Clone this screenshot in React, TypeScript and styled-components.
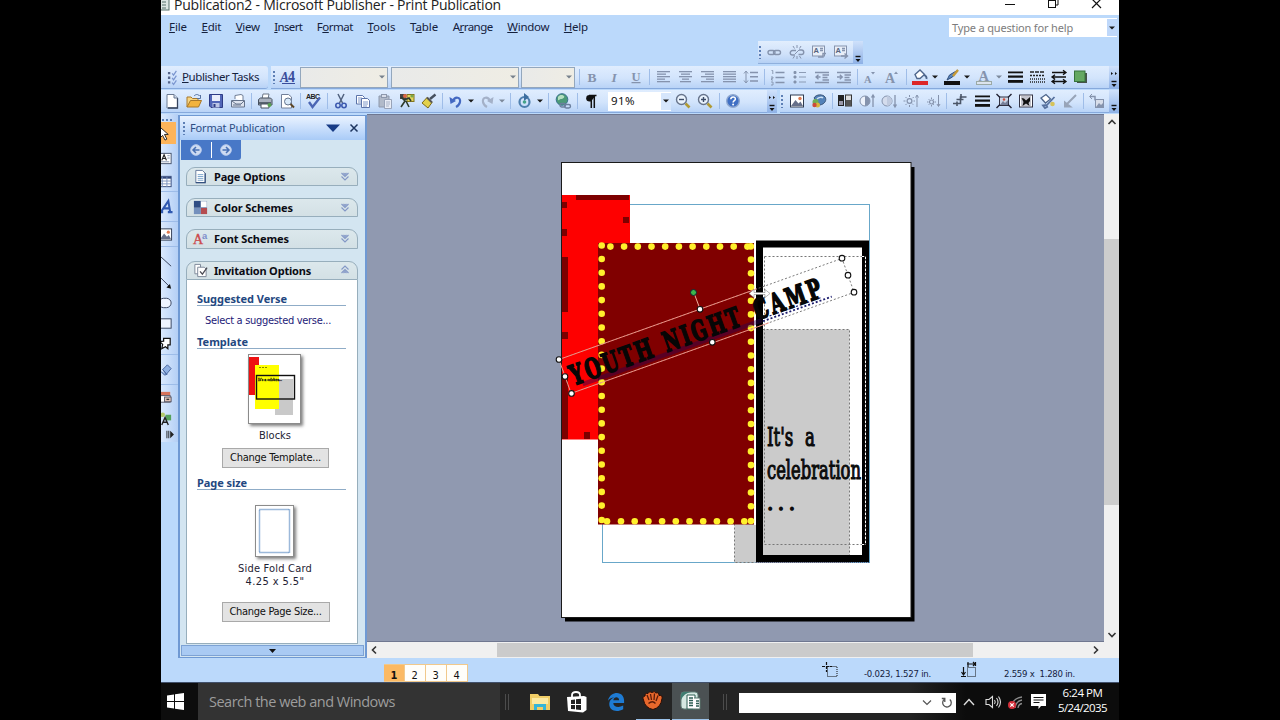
import React, { useLayoutEffect, useRef, useState } from "react";
import styled, { createGlobalStyle } from "styled-components";

const ui = `"Noto Sans", "Open Sans", sans-serif`;
const segoe = `"Open Sans", "Noto Sans", sans-serif`;
const tahoma = `"DejaVu Sans Condensed", "DejaVu Sans", sans-serif`;

const GlobalStyle = createGlobalStyle`
  * { box-sizing: border-box; }
  body { margin: 0; background: #000; overflow: hidden; }
`;

/* ---------- text that is tracked to a fixed width ---------- */

const Tracked = styled.span<{ $size: number; $color?: string; $bold?: boolean; $font?: string }>`
  display: inline-block;
  flex: none;
  white-space: pre;
  font-family: ${(p) => p.$font || ui};
  font-size: ${(p) => p.$size}px;
  line-height: 1.2;
  font-weight: ${(p) => (p.$bold ? 700 : 400)};
  font-stretch: ${(p) => (p.$font === tahoma ? "condensed" : "normal")};
  color: ${(p) => p.$color || "#14213d"};
  u { text-underline-offset: 1px; }
`;

type LabelProps = {
  width: number;
  size?: number;
  color?: string;
  bold?: boolean;
  font?: string;
  children: React.ReactNode;
};

function Label({ width, size = 12, color, bold, font, children }: LabelProps) {
  const ref = useRef<HTMLSpanElement>(null);
  const [spacing, setSpacing] = useState(0);
  useLayoutEffect(() => {
    const el = ref.current;
    if (!el) return;
    const count = (el.textContent || "").length;
    setSpacing((width - el.getBoundingClientRect().width) / count);
  }, [width]);
  return (
    <Tracked ref={ref} $size={size} $color={color} $bold={bold} $font={font} style={{ letterSpacing: spacing }}>
      {children}
    </Tracked>
  );
}

/* ---------- icons ---------- */

const Svg = styled.svg`
  display: block;
  flex: none;
  overflow: visible;
`;

const g = "#8593ad";

const lines = (ws: number[][], c = g) =>
  ws.map(([x, w], i) => <rect key={i} x={x} y={2 + i * 2.5} width={w} height="1.3" fill={c} />);

const icons: Record<string, React.ReactNode> = {
  fileNew: <><path d="M3 1.5h7l3.5 3.5v10H3z" fill="#fff" stroke="#6b7a92" /><path d="M13.5 5v10H4" fill="none" stroke="#34435e" strokeWidth="1.3" /><path d="M10 1.5V5h3.5" fill="#cfd9ea" stroke="#6b7a92" /></>,
  open: <><path d="M1 14V4h4l1.5 1.5H12V8" fill="#f6d583" stroke="#a8782a" /><path d="M1 14L4.500 7.500H15.500L12.500 14z" fill="#f3b33d" stroke="#a8782a" /><path d="M8 3c2-2 4-2 5.500 0l1-1v3.500h-3.500" fill="none" stroke="#56719f" /></>,
  save: <><path d="M1.500 1.500h13v13H3l-1.500-1.500z" fill="#5166b8" stroke="#2e3c86" /><rect x="4" y="2" width="8" height="6" fill="#e9eefb" /><rect x="4.500" y="10" width="7" height="4.500" fill="#bcc7e6" /><rect x="5.500" y="11" width="2" height="3" fill="#2e3c86" /></>,
  mail: <><path d="M5 6V2.500l6-1 2 1V8" fill="#fff" stroke="#717f97" /><path d="M1.500 7.500h13V14h-13z" fill="#dde3ee" stroke="#65738b" /><path d="M2 8l4 3h5l3-3M3 12h8" fill="none" stroke="#65738b" /></>,
  print: <><path d="M5 6l1-5h6l-1 5" fill="#fff" stroke="#6b7687" /><path d="M1.500 6.500l2-1.500h10l1.500 1.500V12h-13.500z" fill="#aab2bf" stroke="#46505f" /><rect x="2" y="9" width="12" height="2" fill="#59636f" /><path d="M4 11h8v4H4z" fill="#fff" stroke="#46505f" /><circle cx="12.500" cy="12" r="2" fill="#58a052" /></>,
  preview: <><path d="M2.500 1.500h7L12.500 4v11h-10z" fill="#fff" stroke="#72809a" /><circle cx="9" cy="8.500" r="3.500" fill="#d9eafa" stroke="#64748e" /><path d="M11.500 11l3.500 3.500" stroke="#5c4524" strokeWidth="2" /></>,
  spell: <><text x="0" y="6" fontSize="7" fontWeight="700" fontFamily="Liberation Sans" fill="#222" textLength="14">ABC</text><path d="M3 9l3.500 5L14 4.500" fill="none" stroke="#4b66b4" strokeWidth="2.400" /></>,
  cut: <><path d="M5 1l4.500 9M11 1L6.500 10" stroke="#51627f" strokeWidth="1.500" /><circle cx="5" cy="12.500" r="2.200" fill="none" stroke="#3e5bb0" strokeWidth="1.600" /><circle cx="11" cy="12.500" r="2.200" fill="none" stroke="#3e5bb0" strokeWidth="1.600" /></>,
  copy: <><path d="M1.500 2.500h6l2 2V11h-8z" fill="#fff" stroke="#5b73a8" /><path d="M3 5h4M3 7h4M3 9h3" stroke="#7f97c8" /><path d="M6.500 5.500h6l2 2v7h-8z" fill="#fff" stroke="#5b73a8" /><path d="M8 9h5M8 11h5M8 13h4" stroke="#7f97c8" /></>,
  paste: <><path d="M2 3h10v11H2z" fill="#b1bac9" stroke="#8d98ac" /><rect x="4.500" y="1.500" width="5" height="3" fill="#d9deea" stroke="#8d98ac" /><path d="M7.500 6.500h7v9h-7z" fill="#e8ecf5" stroke="#98a3b8" /><path d="M9 9h4M9 11h4M9 13h3" stroke="#a8b2c6" /></>,
  design: <><rect x="1" y="1" width="6" height="5" fill="#444" /><rect x="8" y="1.500" width="7" height="7" fill="#e3d45c" stroke="#81751f" /><path d="M2 4l4 4-4 6M5 7l5-2 2 3M7 8l3 6" fill="none" stroke="#2e3b2c" strokeWidth="1.600" /><circle cx="6" cy="3" r="2" fill="#dc6845" /><circle cx="13" cy="3" r="1.600" fill="#79a84b" /></>,
  brush: <><path d="M14.500 1.500L9 6" stroke="#46505f" strokeWidth="2.400" /><path d="M6 4.500l5 5-4 5.500-6-5z" fill="#e3d14b" stroke="#7d6a1a" /><path d="M6 4.500l5 5" stroke="#555" strokeWidth="2" /></>,
  undo: <><path d="M5 8C7 3 13 4 12 9c-.5 2.500-2 4-4 5" fill="none" stroke="#4469c2" strokeWidth="2.200" /><path d="M1.500 4l1 7 5.500-3z" fill="#4469c2" /></>,
  redo: <><path d="M11 8C9 3 3 4 4 9c.5 2.500 2 4 4 5" fill="none" stroke="#a4b1c8" strokeWidth="2.200" /><path d="M14.500 4l-1 7L8 8z" fill="#a4b1c8" /></>,
  rotate: <><circle cx="7.500" cy="9" r="5" fill="none" stroke="#4e7fae" strokeWidth="2.200" /><path d="M7 0l5 4-5 4z" fill="#3c6ea0" /><circle cx="7.500" cy="9" r="1.800" fill="#45a389" /></>,
  globe: <><circle cx="7" cy="6.500" r="5.800" fill="#4c9a78" stroke="#38708b" /><path d="M3 4c2-3 5-2 6-1s-1 3-3 3-2 2-3 1z" fill="#b5e0c0" /><rect x="5" y="10.500" width="5.500" height="3.500" rx="1.700" fill="none" stroke="#6b7f9e" strokeWidth="1.400" /><rect x="9.500" y="11.500" width="6" height="3.500" rx="1.700" fill="none" stroke="#6b7f9e" strokeWidth="1.400" /></>,
  para: <><path d="M13 2H6.500a3.300 3.300 0 000 6.600H8" fill="#111" /><path d="M8.300 2v13M11.300 2v13M6 2.500h7.500" stroke="#111" strokeWidth="1.500" /></>,
  zoomOut: <><circle cx="6.500" cy="6.500" r="5" fill="#eaf3fd" stroke="#67748c" strokeWidth="1.400" /><path d="M4 6.500h5" stroke="#3d4c68" strokeWidth="1.400" /><path d="M10.500 10.500l4 4" stroke="#b09a34" strokeWidth="2.600" /></>,
  zoomIn: <><circle cx="6.500" cy="6.500" r="5" fill="#eaf3fd" stroke="#67748c" strokeWidth="1.400" /><path d="M4 6.500h5M6.500 4v5" stroke="#3d4c68" strokeWidth="1.400" /><path d="M10.500 10.500l4 4" stroke="#b09a34" strokeWidth="2.600" /></>,
  help: <><circle cx="8" cy="8" r="6.300" fill="#3f6fc4" stroke="#8fa8d0" strokeWidth="1.400" /><path d="M5.800 6.200c0-3 4.600-3 4.600-.3 0 1.800-2.300 1.800-2.300 3.600" fill="none" stroke="#fff" strokeWidth="1.500" /><circle cx="8.100" cy="11.600" r="1" fill="#fff" /></>,
  picture: <><rect x="1.500" y="2" width="13" height="12" fill="#fff" stroke="#2e3a50" /><path d="M2 13l4.500-6 3 3.500 2-2 2.500 4.500z" fill="#66708a" /><circle cx="11" cy="5.500" r="1.700" fill="#e07a4f" /></>,
  recolor: <><path d="M3 5c2-4 9-4 11-1 2 3 0 7-5 8z" fill="#5482b8" stroke="#3a5578" /><path d="M6 6c2-2 5-2 6-1" stroke="#cfe2f4" strokeWidth="1.500" fill="none" /><circle cx="4.500" cy="9" r="3" fill="#6fae55" /><circle cx="6.500" cy="12" r="2.500" fill="#d8b53a" /><circle cx="3.500" cy="12" r="2.200" fill="#cc4b3a" /></>,
  shades: <><rect x="1" y="2" width="6" height="11" fill="#222" /><rect x="2" y="8" width="4" height="4" fill="#99a" /><rect x="8.500" y="2" width="6" height="11" fill="#ddd" stroke="#333" /><rect x="8.500" y="7" width="6" height="6" fill="#555" /></>,
  conUp: <><circle cx="6" cy="8" r="5" fill="#edf2fb" stroke={g} /><path d="M6 3a5 5 0 010 10z" fill={g} /><path d="M14 14V2.500m-1.500 2L14 2l1.500 2.500" stroke={g} fill="none" strokeWidth="1.300" /></>,
  conDn: <><circle cx="6" cy="8" r="5" fill="#d4dced" stroke={g} /><path d="M6 3a5 5 0 010 10z" fill="#bfcadf" /><path d="M14 2v11.500m-1.500-2L14 14l1.500-2.500" stroke={g} fill="none" strokeWidth="1.300" /></>,
  briUp: <><circle cx="6.500" cy="8" r="2.400" fill="none" stroke={g} strokeWidth="1.200" /><path d="M6.500 2v2M6.500 12v2M.500 8h2M10.500 8h1.500M2.500 4l1.200 1.200M9 10.500l1.200 1.200M2.500 12l1.200-1.200M9.500 5.200L10.700 4" stroke={g} /><path d="M14 14V2.500m-1.500 2L14 2l1.500 2.500" stroke={g} fill="none" /></>,
  briDn: <><circle cx="6.500" cy="9" r="2" fill="none" stroke={g} strokeWidth="1.200" /><path d="M6.500 4.500v1.500M6.500 12v1.500M2 9h1.500M9.500 9H11M3.500 6l.8.800M9 6l-.8.800M3.500 12l.8-.8M9 12l-.8-.8" stroke={g} /><path d="M13.500 2v11m-1.500-2l1.500 2.500L15 11" stroke={g} fill="none" /></>,
  crop: <path d="M1 10.500h7.500V4h6M4.500 6.500h7M5 13V8.500M9 1v4.500" fill="none" stroke="#4b5668" strokeWidth="1.600" />,
  linesBlk: <><rect x="1" y="2.500" width="15" height="1.800" fill="#111" /><rect x="1" y="6.500" width="15" height="2.200" fill="#111" /><rect x="1" y="11" width="15" height="2.800" fill="#111" /></>,
  compress: <><rect x="3.500" y="4" width="9" height="8.500" fill="#cdd6e6" stroke="#334" /><path d="M4 12l3-4 2 2 3-3v5z" fill="#77809a" /><circle cx="8" cy="6.500" r="1.200" fill="#d04b3a" /><path d="M.500 1L4 4.500M15.500 1L12 4.500M.500 15L4 11.500M15.500 15L12 11.500" stroke="#223" strokeWidth="1.400" /></>,
  wrap: <><rect x="1.500" y="2" width="13" height="12" fill="#fff" stroke="#334" /><path d="M3 4h10M3 6h10M3 8h10M3 10h10M3 12h10" stroke="#889" /><path d="M3.500 5l2.500.5L8 7.500 12 4v4l-1.500 2 1 3L8 10.500 4.500 13l1-4z" fill="#111" /></>,
  format: <><path d="M1 5l5-3.500 4.500 4.500-5 4z" fill="#fff" stroke="#4e668c" strokeWidth="1.300" /><path d="M14.500 4L6 13M7 12l-4 .5 2 2.500 3-1.500" stroke="#56719f" strokeWidth="1.800" fill="none" /><circle cx="12.500" cy="11" r="2.300" fill="#d6c35a" /></>,
  clear: <path d="M14 2L5.500 10.500M3 9.500v4h5z" stroke="#98a4b8" strokeWidth="2" fill="#98a4b8" />,
  reset: <><path d="M1 3.500h5v4" fill="none" stroke={g} strokeWidth="1.500" /><rect x="6.500" y="6.500" width="8" height="8" fill="#d8deea" stroke={g} /><path d="M3 1L.500 3.500 3 6" fill="none" stroke={g} /><path d="M7 14l3-4 2 2 2-2v4z" fill={g} /></>,
  styles: <><text x="0" y="13" fontSize="14" fontWeight="700" fontStyle="italic" fontFamily="Liberation Serif" fill="#394d9b" textLength="9" lengthAdjust="spacingAndGlyphs">A</text><text x="8" y="13" fontSize="16" fontWeight="700" fontFamily="Liberation Serif" fill="#394d9b" textLength="7" lengthAdjust="spacingAndGlyphs">4</text><path d="M2 14.500h13" stroke="#394d9b" /></>,
  bold: <text x="3.500" y="13" fontSize="13.500" fontWeight="700" fontFamily="Liberation Serif" fill={g}>B</text>,
  italic: <text x="5.500" y="13" fontSize="13.500" fontWeight="700" fontStyle="italic" fontFamily="Liberation Serif" fill={g}>I</text>,
  under: <text x="3.500" y="12" fontSize="12.500" fontWeight="700" fontFamily="Liberation Serif" fill={g} textDecoration="underline">U</text>,
  left: lines([[2, 13], [2, 9], [2, 13], [2, 8], [2, 13]]),
  center: lines([[2, 13], [4, 9], [2, 13], [5, 7], [3, 11]]),
  right: lines([[2, 13], [6, 9], [2, 13], [7, 8], [2, 13]]),
  justify: lines([[2, 13], [2, 13], [2, 13], [2, 13], [2, 13]]),
  spacing: <><path d="M3 3v10M1 4.500L3 2l2 2.500M1 11.500L3 14l2-2.500" stroke={g} fill="none" /><path d="M7 3.500h8M7 7.700h8M7 12h8" stroke={g} strokeWidth="1.400" /></>,
  numbers: <><path d="M1.500 1.500h1.300V5M1 8h2v1.300H1.500V11H3M1 13h2v3H1" stroke={g} strokeWidth=".9" fill="none" /><path d="M5.500 3.500h9M5.500 8.500h9M5.500 13.500h9" stroke={g} strokeWidth="1.300" /></>,
  bullets: <><path d="M2 2.500h2v2H2zM2 7h2v2H2zM2 12h2v2H2zM7 3.500h7M7 8h7M7 13h7" stroke={g} fill={g} strokeWidth=".9" /></>,
  outdent: <><path d="M1 3.500h14M8.500 6h6.500M8.500 8.500h5M8.500 11h6.500M1 13.500h14" stroke={g} strokeWidth="1.300" /><path d="M6.500 8H2M4.500 5.800L2 8l2.500 2.200" stroke={g} strokeWidth="1.300" fill="none" /></>,
  indent: <><path d="M1 3.500h14M8.500 6h6.500M8.500 8.500h5M8.500 11h6.500M1 13.500h14" stroke={g} strokeWidth="1.300" /><path d="M1 8h5M3.800 5.800L6.300 8l-2.500 2.200" stroke={g} strokeWidth="1.300" fill="none" /></>,
  shrink: <><text x="2" y="14" fontSize="10.500" fontWeight="700" fontFamily="Liberation Serif" fill={g}>A</text><path d="M9 3h4l-2 2.500z" fill={g} /></>,
  grow: <><text x="1" y="14" fontSize="14" fontWeight="700" fontFamily="Liberation Serif" fill={g}>A</text><path d="M10 5h4l-2-2.500z" fill={g} /></>,
  fill: <><path d="M3 5.500l5-4.500 4.500 4.500L8 9.500H5z" fill="#fff" stroke="#4e668c" strokeWidth="1.400" /><path d="M12 6q3 1 2.500 4" stroke="#4e668c" fill="none" strokeWidth="1.800" /><rect x="0" y="12" width="16" height="4" fill="#dd2626" /></>,
  line: <><path d="M14 1L8.500 8l-5.500 3 2.500-5z" fill="#5a86bd" stroke="#33507b" /><path d="M14 1L9 7" stroke="#c79a34" strokeWidth="2.400" /><rect x="0" y="12" width="16" height="4" fill="#111" /></>,
  fontc: <><text x="2.500" y="12" fontSize="14.500" fontWeight="700" fontFamily="Liberation Serif" fill={g}>A</text><rect x=".500" y="12.500" width="15" height="3" fill="#dce4ee" stroke="#9ba9a5" /></>,
  dashes: <><path d="M1 3h15" stroke="#222" strokeDasharray="4 1" strokeWidth="1.600" /><path d="M1 6.500h15" stroke="#222" strokeDasharray="2 1" strokeWidth="1.600" /><path d="M1 10h15M1 13h15" stroke="#222" strokeDasharray="1 1" strokeWidth="1.600" /></>,
  arrows: <path d="M1 3.500h14M12 1.300L15 3.500 12 5.700M15 8H1M4 5.800L1 8l3 2.200M1 12.500h14M12 10.300l3 2.200-3 2.200M4 10.300l-3 2.200 3 2.200" stroke="#111" strokeWidth="1.300" fill="none" />,
  shadow: <><rect x="4" y="4" width="10" height="10" fill="#455248" /><rect x="1.500" y="2" width="10.500" height="10.500" fill="#64a862" stroke="#36733c" /></>,
  link: <><rect x="1" y="6.500" width="7" height="4" rx="2" fill="none" stroke={g} strokeWidth="1.400" /><rect x="6.500" y="6.500" width="7" height="4" rx="2" fill="none" stroke={g} strokeWidth="1.400" /></>,
  unlink: <><path d="M7 6.500H3.500a2 2 0 000 4.500H6M9.500 10.500h3a2 2 0 000-4.500H10" fill="none" stroke={g} strokeWidth="1.400" /><path d="M8 1v3M4 2l1.500 2.500M12 2l-1.500 2.500M8 12v3M4 14.500L5.500 12M12 14.500L10.500 12M6 10l4-4" stroke={g} /></>,
  boxPrev: <><rect x="1.500" y="2" width="12" height="10" fill="#e8eef8" stroke={g} /><text x="2.500" y="9" fontSize="7.500" fontWeight="700" fontFamily="Liberation Sans" fill="#56647e">A</text><path d="M9 4.500h3M9 6.500h3M7 13h5V9.500h3" stroke={g} strokeWidth="1.400" fill="none" /></>,
  boxNext: <><rect x="1.500" y="2" width="12" height="10" fill="#e8eef8" stroke={g} /><text x="2.500" y="9" fontSize="7.500" fontWeight="700" fontFamily="Liberation Sans" fill="#56647e">A</text><path d="M9 4.500h3M9 6.500h3M8 12h6M11.500 9.500L14.500 12l-3 2.500" stroke={g} strokeWidth="1.400" fill="none" /></>,
  tasks: <><path d="M1 2h2.500v2.500H1zM1 7h2.500v2.500H1zM1 12h2.500v2.500H1z" fill="#56658a" /><path d="M5.500 3.500l1.500 2 3-4.500M5.500 8.500l1.500 2 3-4.500M5.500 13.500l1.500 2 3-4.500" stroke="#7a95cf" fill="none" strokeWidth="1.300" /></>,
  /* drawing tools */
  pointer: <path d="M3 1v12l3-3 2.500 5 2-1L8 9h4z" fill="#fff" stroke="#222" />,
  textbox: <><rect x="0" y="2.500" width="14" height="11" fill="#fff" stroke="#44526c" /><path d="M4 10l2.500-6L9 10M5 8h3" stroke="#222" strokeWidth="1.300" fill="none" /><path d="M10 5h2.500M10 7.500h2.500M3 11.500h9" stroke="#8494ad" /></>,
  table: <><rect x="0" y="2.500" width="14" height="11" fill="#fff" stroke="#33497c" /><path d="M0 4h14" stroke="#33497c" strokeWidth="2" /><path d="M0 7.500h14M0 10.500h14M4.500 3v11M9.500 3v11" stroke="#7c93bd" /></>,
  wordart: <path d="M3 14L11 2l2 12M6 10h7M1 14h4.500M10.500 14h5" stroke="#2f58b0" strokeWidth="2.200" fill="none" />,
  lineTool: <path d="M3 3l11 10" stroke="#333d55" />,
  arrowTool: <><path d="M3 2l9 9" stroke="#333d55" /><path d="M14 13.500l-5-1.300 3.700-3.700z" fill="#111" /></>,
  oval: <rect x="1" y="3.500" width="13" height="10" rx="5" fill="#eef4ff" stroke="#33405c" />,
  rect: <rect x="1" y="3" width="13" height="10" fill="#eef4ff" stroke="#33405c" />,
  shapes: <path d="M6 2.500h7v7h-2.500v4L8 11.500l-4 2 1-4.500-3-3 4-.5z" fill="#fff" stroke="#111" strokeWidth="1.300" />,
  book: <path d="M5 8l5-5 4 4-5 6zM5 8l4 5M3 10l4 4 3-1" fill="#8fb0e2" stroke="#48659d" />,
  form: <><rect x="2" y="2" width="11" height="4" fill="#d7745c" /><rect x="2" y="6" width="11" height="7" fill="#fff" stroke="#556" /><rect x="7" y="7.500" width="7" height="5" fill="#e6c6b8" stroke="#556" /><path d="M9 10h3" stroke="#333" strokeWidth="1.500" /></>,
  gallery: <><rect x="8" y="4" width="6" height="6" fill="#56a25c" /><path d="M4 15l3.500-8L11 15M5 12h5" stroke="#222" fill="none" strokeWidth="1.500" /><circle cx="5" cy="4" r="2.500" fill="#b3c96b" /></>,
  expand: <><path d="M9.500 4v8M11.500 4v8" stroke="#222" /><path d="M13 4l4 4-4 4z" fill="#222" /></>,
  /* task pane */
  pageOpt: <><path d="M3 1.500h7L13 4.500v10H3z" fill="#fff" stroke="#62779a" /><path d="M5 6h6M5 8h6M5 10h6M5 12h6" stroke="#79a3cc" /><path d="M13 4.500v10H3" stroke="#35517f" fill="none" strokeWidth="1.300" /></>,
  colors: <><rect x="1" y="1" width="14" height="14" fill="#8ea1bf" /><rect x="1" y="1" width="7" height="7" fill="#2f4d84" /><rect x="8.500" y="1.500" width="6" height="6" fill="#fff" /><rect x="1" y="8.500" width="7" height="6.500" fill="#7490bd" /><rect x="8.500" y="8.500" width="6.500" height="6.500" fill="#b54c50" /></>,
  fonts: <><text x="0" y="14" fontSize="15" fontFamily="Liberation Serif" fill="#cc4a4d" stroke="#cc4a4d" strokeWidth=".4">A</text><text x="9.500" y="9" fontSize="10" fontWeight="700" fontFamily="Liberation Sans" fill="#7d8ecb">a</text></>,
  invite: <><path d="M2 1.500h6v10H2z" fill="#fff" stroke="#7b8596" /><path d="M5 4.500h7l2 2v8H5z" fill="#fff" stroke="#7b8596" /><path d="M7.500 9l2.500 3 5-7" fill="none" stroke="#4c4c55" strokeWidth="1.400" /></>,
  chevDown: <path d="M4.500 4L8 7.500 11.500 4M4.500 7.500L8 11l3.500-3.500M6.500 4L8 5.500 9.500 4" fill="none" stroke="#8397c6" strokeWidth="1.100" />,
  chevUp: <path d="M4.500 7.500L8 4l3.500 3.500M4.500 11L8 7.500l3.500 3.500M6.500 11L8 9.500 9.500 11" fill="none" stroke="#8397c6" strokeWidth="1.100" />,
  /* status bar */
  position: <><path d="M4.500 0v10M0 4.500h10" stroke="#111" strokeWidth="1.200" strokeDasharray="3 1" /><rect x="5.500" y="4.500" width="9.500" height="10" fill="none" stroke="#111" strokeDasharray="1 1" /></>,
  sizeIcon: <><path d="M6 2h8M7 0v5M14.500 0v4M12 0l2 2-2 2M2.500 5v8M0 14.500h5M.500 10l2 3 2-3" stroke="#111" fill="none" strokeWidth="1.200" /><rect x="6.500" y="5.500" width="8" height="9" fill="none" stroke="#111" strokeDasharray="1 1" /></>,
};

const Icon = ({ name, size = 16 }: { name: string; size?: number }) => (
  <Svg width={size} height={size} viewBox="0 0 16 16">{icons[name]}</Svg>
);

/* ---------- window frame ---------- */

const Screen = styled.div`
  width: 1280px;
  height: 720px;
  padding: 0 161px;
  background: #000;
  overflow: hidden;
`;
const Shell = styled.div`
  width: 958px;
  height: 720px;
  display: flex;
  flex-direction: column;
  background: #bbd9fb;
  overflow: hidden;
`;
const TitleBar = styled.div`
  flex: none;
  height: 15px;
  background: #fff;
  display: flex;
  overflow: hidden;
`;
const TitleText = styled.div`
  margin: -4px 0 0 4px;
  flex: 1;
`;
const MenuArea = styled.div`
  flex: none;
  height: 51px;
  position: relative;
  display: flex;
  align-items: flex-start;
  justify-content: space-between;
`;
const Menus = styled.div`
  display: flex;
  gap: 14.600px;
  padding: 5px 0 0 8px;
`;
const HelpBox = styled.div`
  width: 168px;
  height: 19px;
  margin: 3px 2px 0 0;
  background: #fff;
  display: flex;
  align-items: center;
  padding-left: 3px;
  justify-content: space-between;
`;
const DropButton = styled.div<{ $h: number; $tone?: string }>`
  width: 10px;
  height: ${(p) => p.$h}px;
  background: ${(p) => p.$tone || "#bfd8fa"};
  display: flex;
  align-items: center;
  padding-left: 1px;
`;
const LinkBar = styled.div`
  position: absolute;
  left: 597px;
  top: 26px;
  width: 105px;
  height: 23px;
  display: flex;
  align-items: center;
  background: linear-gradient(#e2eefd, #cfe1fa 60%, #b5d0f4);
  border-bottom: 1px solid #8fb0dd;
`;
const Toolbar = styled.div`
  flex: none;
  height: 24px;
  display: flex;
  gap: 3px;
`;
const Strip = styled.div<{ $w?: number }>`
  height: 23px;
  width: ${(p) => (p.$w ? p.$w + "px" : "auto")};
  flex: ${(p) => (p.$w ? "none" : 1)};
  display: flex;
  align-items: center;
  border-radius: 0 3px 3px 0;
  background: linear-gradient(#e0edfe, #d2e4fc 55%, #b9d3f7);
  border-bottom: 1px solid #86a9dc;
`;
const Slot = styled.div<{ $w?: number }>`
  flex: none;
  width: ${(p) => p.$w || 22}px;
  display: flex;
  justify-content: center;
`;
const ArrowSlot = styled.div`
  flex: none;
  width: 9px;
  padding-left: 1px;
  display: flex;
`;
const Gap = styled.div<{ $w: number }>`
  flex: none;
  width: ${(p) => p.$w}px;
`;
const Fill = styled.div`
  flex: 1;
`;
const Sep = styled.div<{ $w?: number }>`
  flex: none;
  width: ${(p) => p.$w || 5}px;
  height: 16px;
  background: linear-gradient(#9fbde8, #9fbde8) center / 1px 100% no-repeat;
`;
const Grip = styled.div`
  flex: none;
  width: 6px;
  height: 14px;
  background: radial-gradient(circle, #5d7fb5 1px, transparent 1.300px) 0 0 / 4px 4px repeat-y;
`;
const Combo = styled.div<{ $w: number; $active?: boolean }>`
  flex: none;
  width: ${(p) => p.$w}px;
  height: ${(p) => (p.$active ? 19 : 21)}px;
  display: flex;
  align-items: center;
  justify-content: space-between;
  padding: 0 0 0 3px;
  background: ${(p) => (p.$active ? "#fff" : "linear-gradient(90deg, #e9eae9, #efede4)")};
  border: ${(p) => (p.$active ? "none" : "1px solid #93a7bd")};
`;
const OverflowBox = styled.div`
  flex: none;
  width: 10px;
  height: 23px;
  background: linear-gradient(#cfe1fb, #8eb1e6);
  display: grid;
  place-items: end center;
  padding-bottom: 1px;
`;

const Arrow = ({ color = "#1a1a1a" }: { color?: string }) => (
  <ArrowSlot>
    <Svg width="6" height="4"><path d="M0 .500h6L3 3.500z" fill={color} /></Svg>
  </ArrowSlot>
);
const Overflow = ({ more = true }: { more?: boolean }) => (
  <OverflowBox>
    <Svg width="8" height="18">
      {more && <path d="M1 2l2 1.500L1 5zM5 2l2 1.500L5 5z" fill="#111" />}
      <path d="M1.500 11.500h5" stroke="#111" strokeWidth="1.400" />
      <path d="M1.500 14h5L4 17z" fill="#111" />
    </Svg>
  </OverflowBox>
);

/* ---------- body ---------- */

const Body = styled.div`
  flex: none;
  height: 544px;
  display: flex;
`;
const ToolStrip = styled.div`
  flex: none;
  width: 17px;
  height: 328px;
  margin-bottom: auto;
  background: linear-gradient(90deg, #dae9fd, #b4cff5);
  display: flex;
  flex-direction: column;
  overflow: hidden;
  padding-top: 4px;
`;
const Tool = styled.div<{ $on?: boolean; $h?: number; $line?: boolean }>`
  flex: none;
  height: ${(p) => p.$h || 21}px;
  width: ${(p) => (p.$on ? 15 : 17)}px;
  padding-right: ${(p) => (p.$on ? 4 : 5)}px;
  display: flex;
  align-items: center;
  justify-content: flex-end;
  background: ${(p) => (p.$on ? "#fdb45a" : "transparent")};
  border-bottom: ${(p) => (p.$line ? "1px solid #9dbce8" : "0")};
`;
const ToolGrip = styled.div`
  flex: none;
  height: 4px;
  width: 13px;
  background: radial-gradient(circle, #5d7fb5 1px, transparent 1.300px) 0 0 / 4px 4px repeat-x;
`;
const Pane = styled.div`
  flex: none;
  width: 189px;
  height: 543px;
  margin-top: 1px;
  border: 2px solid #6f99d3;
  border-width: 1px 2px 1px 2px;
  background: #d3e5f1;
  display: flex;
  flex-direction: column;
`;
const PaneHeader = styled.div`
  flex: none;
  height: 24px;
  display: flex;
  align-items: center;
  padding: 0 7px 0 2px;
  background: linear-gradient(#eaf3ff, #c3dbfb 60%, #a9cbf7);
`;
const PaneNav = styled.div`
  width: 60px;
  height: 20px;
  margin-left: 1px;
  background: #4878c7;
  border-radius: 0 0 3px 0;
  display: flex;
  align-items: center;
  justify-content: center;
  gap: 8.500px;
`;
const NavLine = styled.div`
  width: 1px;
  height: 16px;
  background: #fff;
`;
const Cards = styled.div`
  padding: 7px 6px 0 6px;
  display: flex;
  flex-direction: column;
  gap: 12px;
  flex: 1;
`;
const Card = styled.div`
  flex: none;
  height: 19.200px;
  width: 172px;
  display: flex;
  align-items: center;
  padding: 0 4px 0 6px;
  gap: 6px;
  border: 1px solid #97aebc;
  border-radius: 9px 9px 0 0;
  background: linear-gradient(#dce8ec, #d3e0e5);
`;
const CardBody = styled.div`
  width: 172px;
  height: 364px;
  margin-top: -12px;
  padding: 12px 11px 0 10px;
  background: #fff;
  border: 1px solid #97aebc;
  border-top: 0;
  display: flex;
  flex-direction: column;
  align-items: center;
`;
const Heading = styled.div<{ $push?: number }>`
  align-self: stretch;
  flex: none;
  height: 14px;
  margin-top: ${(p) => p.$push || 0}px;
  border-bottom: 1px solid #8facc7;
  display: flex;
  align-items: center;
`;
const Line = styled.div<{ $top: number; $link?: boolean }>`
  flex: none;
  margin: ${(p) => p.$top}px ${(p) => (p.$link ? 7 : 0)}px 0 ${(p) => (p.$link ? 0 : 7)}px;
  height: 13px;
  display: flex;
  align-items: center;
`;
const PaneButton = styled.div<{ $w: number; $top: number }>`
  flex: none;
  width: ${(p) => p.$w}px;
  height: 20px;
  margin: ${(p) => p.$top}px 0 0 8px;
  display: flex;
  align-items: center;
  justify-content: center;
  background: #e3e3e3;
  border: 1px solid #a9a9a9;
`;
const Thumb = styled.div<{ $w: number; $h: number; $top: number }>`
  flex: none;
  width: ${(p) => p.$w}px;
  height: ${(p) => p.$h}px;
  margin: ${(p) => p.$top}px 0 0 6px;
  background: #fff;
  border: 1px solid #8b8b8b;
  box-shadow: 2px 2px 3px rgba(0, 0, 0, 0.5);
`;
const PaneFoot = styled.div`
  flex: none;
  height: 11px;
  margin: 0 1px 1px;
  background: #a9caf3;
  border: 1px solid #7da2d4;
  display: grid;
  place-items: center;
`;
const Work = styled.div`
  flex: 1;
  display: flex;
  flex-direction: column;
`;
const WorkTop = styled.div`
  flex: none;
  height: 528px;
  display: flex;
`;
const Canvas = styled.div`
  width: 737px;
  height: 528px;
  border-top: 1px solid #6f7790;
  border-bottom: 1px solid #6f7790;
  background: #9099b0;
  position: relative;
`;
const VScroll = styled.div`
  flex: 1;
  background: #f0f0f0;
  display: flex;
  flex-direction: column;
  align-items: center;
  justify-content: space-between;
  padding: 5px 0 4px;
`;
const VThumb = styled.div`
  width: 100%;
  height: 266px;
  margin-bottom: 13px;
  background: #cdcdcd;
`;
const HScroll = styled.div`
  height: 16px;
  background: #f0f0f0;
  display: flex;
  align-items: center;
  justify-content: space-between;
  padding: 0 20px 0 4px;
`;
const HThumb = styled.div`
  width: 476px;
  height: 14px;
  background: #cbcbcb;
`;

/* ---------- publication page ---------- */

const Artwork = styled.svg`
  position: absolute;
  left: 0;
  top: 0;
  overflow: visible;
`;

const step = 13.7;
const range = (n: number) => Array.from({ length: n }, (_, i) => i);

const dots: [number, number][] = [
  ...range(11).map((i): [number, number] => [610.4 + i * step, 246.6]),
  ...range(10).map((i): [number, number] => [621 + i * step, 521.3]),
  ...range(19).map((i): [number, number] => [601.7, 259 + i * step]),
  ...range(19).map((i): [number, number] => [751, 259.6 + i * step]),
  [601.7, 245.5], [750.8, 246.4], [601.7, 520], [607, 521.3], [751, 521],
];

const marks: [number, number, number, number][] = [
  [576, 195, 53, 5], [562, 202, 5, 6], [562, 229, 5, 7], [562, 257, 6, 55],
  [562, 332, 6, 7], [562, 378, 6, 61], [584, 432, 6, 7], [623, 217, 6, 6],
];

const handles: [number, number][] = [
  [559, 359.5], [700, 309.3], [842, 258.2], [565, 376.5], [848, 275.2],
  [571.5, 393.4], [712.3, 342.3], [854, 292.2],
];

const words: [string, number, number][] = [
  ["YOUTH", 5, 89], ["NIGHT", 104, 83], ["CAMP", 200, 73],
];

function Publication() {
  return (
    <Artwork width="737" height="526" viewBox="367 115 737 526">
      <rect x="565" y="167" width="349.500" height="454.500" fill="#000" />
      <rect x="561.500" y="162.500" width="349.500" height="455" fill="#fff" stroke="#1a1a1a" />
      <rect x="602.500" y="204.500" width="267" height="358" fill="none" stroke="#2f86b4" strokeDasharray="1 1" />
      <rect x="602.500" y="204.500" width="267" height="358" fill="none" stroke="#2f86b4" opacity=".45" />
      <rect x="562" y="195" width="68" height="244.500" fill="#fe0000" />
      {marks.map(([x, y, w, h], i) => <rect key={i} x={x} y={y} width={w} height={h} fill="#7d0000" />)}
      <rect x="734.500" y="329.500" width="115" height="233" fill="#cbcbcb" stroke="#777" strokeDasharray="2 2" />
      <rect x="759.500" y="244" width="106" height="314.500" fill="none" stroke="#000" strokeWidth="7" />
      <path d="M756 562.500H869" stroke="#557" strokeDasharray="1 1" />
      <rect x="754" y="241" width="2" height="284" fill="#fff" />
      <rect x="598" y="243" width="156" height="281.500" fill="#800000" />
      {dots.map(([x, y], i) => <circle key={i} cx={x} cy={y} r="3.300" fill="#fff02c" />)}
      <rect x="764.500" y="256.500" width="101" height="288" fill="none" stroke="#777" strokeDasharray="2 2" />
      <path d="M865.500 257V545M862 544.500h4M862 256.500h4" fill="none" stroke="#fff" strokeDasharray="2 2" />
      <g fontFamily="DejaVu Serif" fontSize="26" fill="#0b0b0b" stroke="#0b0b0b" strokeWidth="1.200">
        <text x="767" y="446" textLength="48" lengthAdjust="spacingAndGlyphs" wordSpacing="10">It's a</text>
        <text x="767" y="478.500" textLength="94" lengthAdjust="spacingAndGlyphs">celebration</text>
        <text x="767" y="510" fontSize="20" textLength="28" strokeWidth="1.500">...</text>
      </g>
      <g transform="translate(559 359.500) rotate(-19.650)">
        <rect x="14" y="29" width="190" height="4.500" fill="#2a0050" opacity=".45" />
        <path d="M205 32.500H278" stroke="#1b1b6e" strokeWidth="1.800" strokeDasharray="2 2" />
        <path d="M205 29.800H268" stroke="#1b1b6e" strokeWidth="1.200" strokeDasharray="2 2" />
        <g fontSize="27.500" fontFamily="DejaVu Serif" fontWeight="700" fill="#060606" stroke="#060606" strokeWidth="1.700" letterSpacing="4">
          {words.map(([word, x, w]) => (
            <text key={word} x={x} y="29.500" textLength={w} lengthAdjust="spacingAndGlyphs">{word}</text>
          ))}
        </g>
        <rect width="300.500" height="36" fill="none" stroke="#6b6b6b" strokeWidth=".8" strokeDasharray="2 2" />
        <path d="M210 0H0V36H210" fill="none" stroke="#ff9c8c" strokeWidth=".8" />
      </g>
      <path d="M700 309L694 293" stroke="#f0b0a0" />
      <circle cx="693.500" cy="292.500" r="3" fill="#3cb64b" stroke="#123" />
      {handles.map(([x, y], i) => <circle key={i} cx={x} cy={y} r="2.800" fill="#fff" stroke="#111" strokeWidth="1.100" />)}
      <path d="M749 293.500l5-4v3h11v-3l5 4-5 4v-3h-11v3z" fill="#fff" stroke="#8a8a8a" strokeWidth=".6" />
    </Artwork>
  );
}

/* ---------- status bar and taskbar ---------- */

const Status = styled.div`
  flex: none;
  height: 25px;
  display: flex;
  align-items: center;
  border-bottom: 1px solid #41506a;
`;
const PageTabs = styled.div`
  display: flex;
  margin-top: 6px;
  margin-left: 223px;
`;
const PageTab = styled.div<{ $on?: boolean }>`
  width: 21px;
  height: 18px;
  padding-top: 5px;
  display: flex;
  align-items: center;
  justify-content: center;
  background: ${(p) => (p.$on ? "#fbb963" : "#fffefa")};
  border: 1px solid #f1c98c;
  border-left-width: 0;
`;
const Readout = styled.div<{ $left: number }>`
  margin-left: ${(p) => p.$left}px;
  padding-top: 7px;
  display: flex;
`;
const Taskbar = styled.div`
  flex: none;
  height: 37px;
  display: flex;
  align-items: center;
  background: linear-gradient(90deg, #242424 78%, #0c0c0c 84%);
`;
const Start = styled.div`
  width: 37px;
  height: 37px;
  background: #0d0d0d;
  display: flex;
  align-items: center;
  padding-left: 6px;
`;
const Search = styled.div`
  width: 302px;
  height: 37px;
  background: #333;
  display: flex;
  align-items: center;
  padding: 1px 0 0 11px;
`;
const TaskButton = styled.div<{ $w?: number; $open?: boolean; $active?: boolean }>`
  width: ${(p) => p.$w || 38}px;
  height: 37px;
  display: grid;
  place-items: center;
  background: ${(p) => (p.$active ? "#4b5153" : "transparent")};
  border-bottom: ${(p) => (p.$open ? "1px solid #9cc3ea" : "0")};
`;
const Address = styled.div`
  width: 217px;
  height: 20px;
  margin: 2px 0 0 1px;
  background: #fff;
  display: flex;
  align-items: center;
  justify-content: flex-end;
`;
const Clock = styled.div`
  margin-left: 10px;
  width: 49px;
  height: 32px;
  display: flex;
  flex-direction: column;
  align-items: center;
  gap: 2px;
`;
const Handle = styled.div<{ $l: number; $r: number }>`
  margin: 0 ${(p) => p.$r}px 0 ${(p) => p.$l}px;
  width: 4px;
  height: 16px;
  border: solid #4c4c4c;
  border-width: 0 1px;
`;

const menuItems: [string, string, string, number][] = [
  ["", "F", "ile", 18], ["", "E", "dit", 19.5], ["", "V", "iew", 24], ["", "I", "nsert", 28],
  ["F", "o", "rmat", 36], ["", "T", "ools", 28], ["T", "a", "ble", 28], ["A", "r", "range", 40],
  ["", "W", "indow", 42], ["", "H", "elp", 24],
];

const tools: { name: string; h: number; on?: boolean; line?: boolean }[] = [
  { name: "pointer", h: 22, on: true }, { name: "textbox", h: 28 }, { name: "table", h: 20, line: true },
  { name: "wordart", h: 30, line: true }, { name: "picture", h: 25, line: true }, { name: "lineTool", h: 29 },
  { name: "arrowTool", h: 15 }, { name: "oval", h: 22 }, { name: "rect", h: 20 },
  { name: "shapes", h: 22, line: true }, { name: "book", h: 30, line: true }, { name: "form", h: 24 },
  { name: "gallery", h: 19 }, { name: "expand", h: 13 },
];

const Icons = ({ names }: { names: string[] }) => (
  <>{names.map((n) => <Slot key={n}><Icon name={n} /></Slot>)}</>
);

const cards: [string, string, number][] = [
  ["pageOpt", "Page Options", 71], ["colors", "Color Schemes", 79], ["fonts", "Font Schemes", 75], ["invite", "Invitation Options", 97],
];

function TaskPane() {
  return (
    <Pane>
      <PaneHeader>
        <Grip />
        <Gap $w={2} />
        <Label width={95} size={11} color="#2d4d83">Format Publication</Label>
        <Fill />
        <Svg width="14" height="8"><path d="M0 .500h14L7 8z" fill="#183c86" /></Svg>
        <Gap $w={10} />
        <Svg width="8" height="8"><path d="M.500.500l7 7M7.500.500l-7 7" stroke="#1d355f" strokeWidth="1.500" /></Svg>
      </PaneHeader>
      <PaneNav>
        <Svg width="12" height="12"><circle cx="6" cy="6" r="5.300" fill="#cfdcf2" stroke="#b8cbed" /><path d="M9.500 6H3M6 3L3 6l3 3" stroke="#4870b5" fill="none" strokeWidth="1.500" /></Svg>
        <NavLine />
        <Svg width="12" height="12"><circle cx="6" cy="6" r="5.300" fill="#cfdcf2" stroke="#b8cbed" /><path d="M2.500 6H9M6 3l3 3-3 3" stroke="#4870b5" fill="none" strokeWidth="1.500" /></Svg>
      </PaneNav>
      <Cards>
        {cards.map(([icon, text, w], i) => (
          <Card key={text}>
            <Icon name={icon} size={15} />
            <Label width={w} size={11} color="#0b0b14" bold>{text}</Label>
            <Fill />
            <Icon name={i === 3 ? "chevUp" : "chevDown"} />
          </Card>
        ))}
        <CardBody>
          <Heading><Label width={90} size={11} bold color="#23477f">Suggested Verse</Label></Heading>
          <Line $top={8} $link><Label width={126} size={11} color="#1d1a78" font={tahoma}>Select a suggested verse...</Label></Line>
          <Heading $push={8}><Label width={51} size={11} bold color="#23477f">Template</Label></Heading>
          <Thumb $w={53} $h={70} $top={5}>
            <Svg width="51" height="68">
              <rect x="0" y="2" width="10" height="38" fill="#ee1111" />
              <rect x="26" y="24" width="18" height="36" fill="#c9c9c9" />
              <rect x="6" y="10" width="24" height="44" fill="#ffff00" />
              <rect x="7.500" y="20.500" width="38" height="23.500" fill="none" stroke="#111" strokeWidth="1.400" />
              <text x="9" y="25.500" fontSize="5" fontWeight="700" fontFamily="Liberation Serif" textLength="24" lengthAdjust="spacingAndGlyphs" fill="#111" stroke="#111" strokeWidth=".3">It's a celebra...</text>
              <path d="M10 12.500h9" stroke="#880" strokeDasharray="2 1" />
            </Svg>
          </Thumb>
          <Line $top={5}><Label width={32} size={11} color="#1e2233" font={tahoma}>Blocks</Label></Line>
          <PaneButton $w={107} $top={6}><Label width={91} size={11} color="#111" font={tahoma}>Change Template...</Label></PaneButton>
          <Heading $push={8}><Label width={50} size={11} bold color="#23477f">Page size</Label></Heading>
          <Thumb $w={39} $h={52} $top={15}>
            <Svg width="37" height="50"><rect x="3.500" y="3.500" width="30" height="43" fill="none" stroke="#3a74b5" strokeDasharray="1 1" strokeWidth="1.500" /></Svg>
          </Thumb>
          <Line $top={5}><Label width={74} size={11} color="#1e2233" font={tahoma}>Side Fold Card</Label></Line>
          <Line $top={0}><Label width={59} size={11} color="#1e2233" font={tahoma}>4.25 x 5.5"</Label></Line>
          <PaneButton $w={108} $top={14}><Label width={92} size={11} color="#111" font={tahoma}>Change Page Size...</Label></PaneButton>
        </CardBody>
      </Cards>
      <PaneFoot><Svg width="7" height="4"><path d="M0 0h7L3.500 4z" fill="#111" /></Svg></PaneFoot>
    </Pane>
  );
}

export default function App() {
  return (
    <Screen>
      <GlobalStyle />
      <Shell>
        <TitleBar>
          <Svg width="9" height="12"><rect x="-4" y="-2" width="12" height="12" fill="#dbe6e3" stroke="#54716b" /><path d="M1 2h4M1 5h4M1 8h4" stroke="#54716b" /></Svg>
          <TitleText><Label width={327} size={14} color="#222" font={segoe}>Publication2 - Microsoft Publisher - Print Publication</Label></TitleText>
          <Svg width="114" height="12">
            <path d="M0 4.500h10M87 -1l9 9M96-1l-9 9" stroke="#111" strokeWidth="1.200" fill="none" />
            <rect x="43.500" y=".500" width="7" height="7" fill="#fff" stroke="#111" />
            <path d="M46 0v-2h7v7h-2" stroke="#111" fill="none" />
          </Svg>
        </TitleBar>

        <MenuArea>
          <Menus>
            {menuItems.map(([a, b, c, w]) => <Label key={a + b + c} width={w} size={11.5}>{a}<u>{b}</u>{c}</Label>)}
          </Menus>
          <HelpBox>
            <Label width={121} size={11} color="#7c7c7c">Type a question for help</Label>
            <DropButton $h={17}><Arrow /></DropButton>
          </HelpBox>
          <LinkBar>
            <Grip />
            <Icons names={["link", "unlink", "boxPrev", "boxNext"]} />
            <Fill /><Overflow more={false} />
          </LinkBar>
        </MenuArea>

        <Toolbar>
          <Strip $w={107}>
            <Gap $w={6} /><Icon name="tasks" size={15} />
            <Label width={77} size={11.5}><u>P</u>ublisher Tasks</Label>
          </Strip>
          <Strip>
            <Gap $w={1} /><Grip /><Slot $w={20}><Icon name="styles" /></Slot><Gap $w={2} />
            <Combo $w={88}><i /><Arrow color="#77818c" /></Combo><Gap $w={3} />
            <Combo $w={128}><i /><Arrow color="#77818c" /></Combo><Gap $w={2} />
            <Combo $w={54}><i /><Arrow color="#77818c" /></Combo>
            <Gap $w={2} /><Sep $w={4} />
            <Icons names={["bold", "italic", "under"]} /><Sep />
            <Icons names={["left", "center", "right", "justify", "spacing"]} /><Sep />
            <Icons names={["numbers", "bullets", "outdent", "indent"]} /><Sep $w={4} />
            <Icons names={["shrink", "grow"]} /><Sep $w={6} />
            <Icons names={["fill"]} /><Arrow />
            <Gap $w={1} /><Icons names={["line"]} /><Arrow />
            <Gap $w={1} /><Icons names={["fontc"]} /><Arrow color="#7d899b" />
            <Icons names={["linesBlk", "dashes", "arrows", "shadow"]} />
            <Fill /><Overflow />
          </Strip>
        </Toolbar>

        <Toolbar>
          <Strip $w={616}>
            <Icons names={["fileNew", "open", "save", "mail"]} /><Sep />
            <Icons names={["print", "preview"]} /><Sep />
            <Icons names={["spell"]} /><Sep />
            <Icons names={["cut", "copy", "paste", "design", "brush"]} /><Sep />
            <Icons names={["undo"]} /><Arrow /><Icons names={["redo"]} /><Arrow color="#7d899b" /><Sep $w={7} />
            <Icons names={["rotate"]} /><Arrow /><Sep $w={7} />
            <Icons names={["globe"]} /><Sep $w={6} />
            <Icons names={["para"]} /><Gap $w={6} />
            <Combo $w={63} $active><Label width={24} size={11.5} color="#111">91%</Label><DropButton $h={17} $tone="#d6e6fc"><Arrow /></DropButton></Combo>
            <Gap $w={1} />
            <Icons names={["zoomOut", "zoomIn"]} /><Sep $w={6} />
            <Icons names={["help"]} />
            <Fill /><Overflow />
          </Strip>
          <Strip>
            <Grip />
            <Icons names={["picture", "recolor"]} /><Sep $w={4} />
            <Icons names={["shades", "conUp", "conDn", "briUp", "briDn"]} /><Sep />
            <Icons names={["crop", "linesBlk", "compress", "wrap", "format", "clear"]} /><Sep />
            <Icons names={["reset"]} />
            <Fill /><Overflow more={false} />
          </Strip>
        </Toolbar>

        <Body>
          <ToolStrip>
            <ToolGrip />
            {tools.map((t) => <Tool key={t.name} $h={t.h} $on={t.on} $line={t.line}><Icon name={t.name} size={15} /></Tool>)}
          </ToolStrip>
          <TaskPane />
          <Work>
            <WorkTop>
              <Canvas><Publication /></Canvas>
              <VScroll>
                <Svg width="8" height="6"><path d="M.500 5L4 1.500 7.500 5" stroke="#333" strokeWidth="1.600" fill="none" /></Svg>
                <VThumb />
                <Svg width="8" height="6"><path d="M.500 1L4 4.500 7.500 1" stroke="#333" strokeWidth="1.600" fill="none" /></Svg>
              </VScroll>
            </WorkTop>
            <HScroll>
              <Svg width="6" height="8"><path d="M5 .500L1.500 4 5 7.500" stroke="#333" strokeWidth="1.600" fill="none" /></Svg>
              <HThumb />
              <Svg width="6" height="8"><path d="M1 .500L4.500 4 1 7.500" stroke="#333" strokeWidth="1.600" fill="none" /></Svg>
            </HScroll>
          </Work>
        </Body>

        <Status>
          <PageTabs>
            {["1", "2", "3", "4"].map((n) => (
              <PageTab key={n} $on={n === "1"}><Label width={7} size={11} bold={n === "1"} color="#111" font={tahoma}>{n}</Label></PageTab>
            ))}
          </PageTabs>
          <Gap $w={354} />
          <Icon name="position" />
          <Readout $left={26}><Label width={67} size={9.5} font={tahoma}>-0.023, 1.527 in.</Label></Readout>
          <Gap $w={30} />
          <Icon name="sizeIcon" />
          <Readout $left={27}><Label width={71} size={9.5} font={tahoma}>2.559 x  1.280 in.</Label></Readout>
        </Status>

        <Taskbar>
          <Start><Svg width="17" height="17"><path d="M0 2.500l7-1V8H0zM8 1.300L17 0v8H8zM0 9h7v6.500l-7-1zM8 9h9v8l-9-1.300z" fill="#fff" /></Svg></Start>
          <Search><Label width={186} size={14.5} color="#9d9d9d" font={segoe}>Search the web and Windows</Label></Search>
          <Handle $l={5} $r={13} />
          <TaskButton $w={36}><Svg width="20" height="18"><path d="M0 1h8l1.500 2H20v14H0z" fill="#f0cd66" /><rect x="2" y="5" width="16" height="6" fill="#fbe9a2" /><path d="M4 17v-6h12v6h-3v-3H7v3z" fill="#35b5d8" /></Svg></TaskButton>
          <TaskButton><Svg width="20" height="22"><path d="M0 6l17-1 2.500 1V19L16 21.500 1 20z" fill="#fff" /><path d="M5 7V4q0-3 4-3t4 3v3" stroke="#fff" strokeWidth="1.800" fill="none" /><path d="M4 9l4-.5V13H4zM9 8.300l5-.6V13H9zM4 14h4v4.300L4 18zM9 14h5v5l-5-.6z" fill="#222" /></Svg></TaskButton>
          <TaskButton $w={40}><Svg width="18" height="20" viewBox="0 0 20 20"><path d="M1 8.500C2.500 2.500 7 0 11 0c5 0 8 4 8 8.500V11H7c0 4.500 6 6 11 3v4C11 22 2.500 20 2.500 12 2.500 9 4.500 6 8 5 4.500 5 2.500 6.500 1 8.500zM7 8h6.500C13.500 3.500 7.500 3.500 7 8z" fill="#1e7bd3" fillRule="evenodd" /></Svg></TaskButton>
          <TaskButton $w={34} $open><Svg width="22" height="20"><path d="M1.500 9Q0 5.500 3 5q0-3.500 3-2.500 1.500-3 4-1 2.500-2 4 .5 3-1 3 2.500 4-.5 3 3-1 9-9 11Q3 17 1.500 9z" fill="#e8682c" stroke="#2c0d05" /><path d="M5 4l2 5M8.500 3l1 6M12.500 2.500l-.5 6.500M16 4.500L14 10M6.500 12.500q4-3.500 7 0" stroke="#5a1c0a" fill="none" strokeWidth="1.300" /></Svg></TaskButton>
          <Gap $w={2} />
          <TaskButton $w={37} $open $active><Svg width="22" height="22"><rect x="1" y="2" width="17" height="17" rx="3" fill="#d5e8e2" stroke="#628078" /><path d="M1 10q3-7 10-8H3Q1 3 1 5z" fill="#3f7d71" /><path d="M7 5h8v14H7z" fill="#fff" stroke="#2c5e53" /><path d="M14 8h6v11h-7" fill="#fff" stroke="#58766d" /><path d="M9 8h4M9 10.500h4M9 13h4M9 15.500h4M16 11h3M16 13.500h3M16 16h3" stroke="#2c5e53" strokeWidth="1.300" /></Svg></TaskButton>
          <Handle $l={14} $r={11} />
          <Address>
            <Svg width="10" height="6"><path d="M1 .500l4 4 4-4" stroke="#555" fill="none" strokeWidth="1.200" /></Svg>
            <Gap $w={9} />
            <Svg width="12" height="13"><path d="M8.800 3.500A4.300 4.300 0 113.500 3.200M3.800 6V2.500H.800" stroke="#555" fill="none" strokeWidth="1.300" /></Svg>
            <Gap $w={3} />
          </Address>
          <Gap $w={7} />
          <Svg width="12" height="8"><path d="M1 7l5-5.500L11 7" stroke="#ddd" fill="none" strokeWidth="1.400" /></Svg>
          <Gap $w={10} />
          <Svg width="16" height="14"><path d="M1 4.500h3l3.500-3v11L4 9.500H1zM9.500 5q1.500 2 0 4M11.500 3q3 4 0 8M13.500 1.500q4 5.500 0 11" stroke="#ddd" fill="none" strokeWidth="1.100" /></Svg>
          <Gap $w={7} />
          <Svg width="15" height="16"><path d="M14 3Q5 4 3 13M14 6Q8 7 7 14M14 9.500q-3.500.500-4 4.500" stroke="#8b8b8b" fill="none" strokeWidth="1.300" /><circle cx="4" cy="11" r="4" fill="#d32f3a" /><path d="M2.300 9.300l3.400 3.400M5.700 9.300l-3.400 3.400" stroke="#fff" strokeWidth="1.200" /></Svg>
          <Gap $w={8} />
          <Svg width="15" height="15"><path d="M0 0h15v12h-5l-2.500 3V12H0z" fill="#fff" /><path d="M2.500 3.500h10M2.500 6h10M2.500 8.500h6" stroke="#111" /></Svg>
          <Gap $w={2} />
          <Clock>
            <Label width={40} size={11.5} color="#fff" font={segoe}>6:24 PM</Label>
            <Label width={49} size={11.5} color="#fff" font={segoe}>5/24/2035</Label>
          </Clock>
        </Taskbar>
      </Shell>
    </Screen>
  );
}
